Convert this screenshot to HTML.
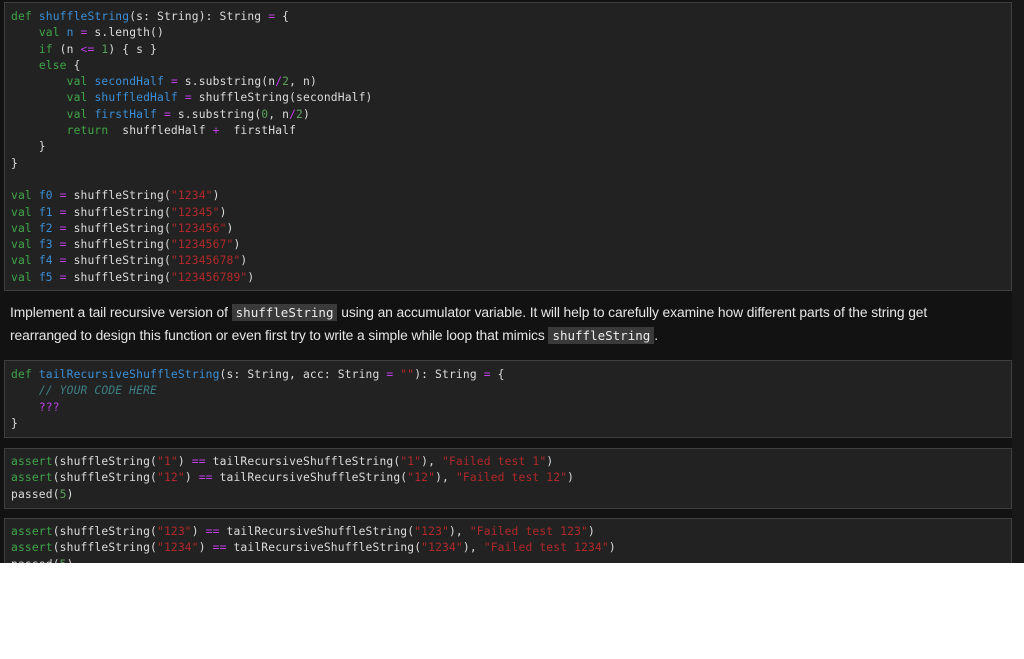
<!DOCTYPE html>
<html><head><style>
html,body{margin:0;padding:0;background:#fff;}
#wrap{position:absolute;left:0;top:0;width:1024px;height:563px;background:#121212;overflow:hidden;}
#strip{position:absolute;left:1012px;top:0;width:12px;height:563px;background:#181818;}
.blk{position:absolute;left:4px;width:1006px;background:#222222;border:1px solid #404040;}
pre{margin:0;padding:0;font-family:"DejaVu Sans Mono","Liberation Mono",monospace;font-size:11.3px;line-height:16.3px;color:#dcdcdc;position:absolute;left:6px;white-space:pre;letter-spacing:0.15px;}
.k{color:#3fa648}.f{color:#3a8fd8}.v{color:#3a8fd8}.o{color:#c03fe8}.n{color:#5ca15c}.s{color:#b2282a}.c{color:#3e8083;font-style:italic}
p{position:absolute;left:10px;top:301px;margin:0;width:1010px;white-space:nowrap;font-family:"Liberation Sans",sans-serif;font-size:13.85px;line-height:22px;color:#e6e6e6;letter-spacing:-0.1px;}
code{font-family:"DejaVu Sans Mono","Liberation Mono",monospace;font-size:12.5px;background:#3a3a3a;padding:1px 4px;color:#eee;letter-spacing:0;}
</style></head><body>
<div id="wrap"><div id="strip"></div>
<div class="blk" style="top:2px;height:287px"><pre style="top:6px"><span class="k">def</span> <span class="f">shuffleString</span>(s: String): String <span class="o">=</span> {
    <span class="k">val</span> <span class="v">n</span> <span class="o">=</span> s.length()
    <span class="k">if</span> (n <span class="o">&lt;=</span> <span class="n">1</span>) { s }
    <span class="k">else</span> {
        <span class="k">val</span> <span class="v">secondHalf</span> <span class="o">=</span> s.substring(n<span class="o">/</span><span class="n">2</span>, n)
        <span class="k">val</span> <span class="v">shuffledHalf</span> <span class="o">=</span> shuffleString(secondHalf)
        <span class="k">val</span> <span class="v">firstHalf</span> <span class="o">=</span> s.substring(<span class="n">0</span>, n<span class="o">/</span><span class="n">2</span>)
        <span class="k">return</span>  shuffledHalf <span class="o">+</span>  firstHalf
    }
}

<span class="k">val</span> <span class="v">f0</span> <span class="o">=</span> shuffleString(<span class="s">"1234"</span>)
<span class="k">val</span> <span class="v">f1</span> <span class="o">=</span> shuffleString(<span class="s">"12345"</span>)
<span class="k">val</span> <span class="v">f2</span> <span class="o">=</span> shuffleString(<span class="s">"123456"</span>)
<span class="k">val</span> <span class="v">f3</span> <span class="o">=</span> shuffleString(<span class="s">"1234567"</span>)
<span class="k">val</span> <span class="v">f4</span> <span class="o">=</span> shuffleString(<span class="s">"12345678"</span>)
<span class="k">val</span> <span class="v">f5</span> <span class="o">=</span> shuffleString(<span class="s">"123456789"</span>)</pre></div>
<p>Implement a tail recursive version of <code>shuffleString</code> using an accumulator variable. It will help to carefully examine how different parts of the string get<br>rearranged to design this function or even first try to write a simple while loop that mimics <code>shuffleString</code>.</p>
<div class="blk" style="top:360px;height:76px"><pre style="top:6px"><span class="k">def</span> <span class="f">tailRecursiveShuffleString</span>(s: String, acc: String <span class="o">=</span> <span class="s">""</span>): String <span class="o">=</span> {
    <span class="c">// YOUR CODE HERE</span>
    <span class="o">???</span>
}</pre></div>
<div class="blk" style="top:448px;height:59px"><pre style="top:5px"><span class="k">assert</span>(shuffleString(<span class="s">"1"</span>) <span class="o">==</span> tailRecursiveShuffleString(<span class="s">"1"</span>), <span class="s">"Failed test 1"</span>)
<span class="k">assert</span>(shuffleString(<span class="s">"12"</span>) <span class="o">==</span> tailRecursiveShuffleString(<span class="s">"12"</span>), <span class="s">"Failed test 12"</span>)
passed(<span class="n">5</span>)</pre></div>
<div class="blk" style="top:518px;height:59px"><pre style="top:5px"><span class="k">assert</span>(shuffleString(<span class="s">"123"</span>) <span class="o">==</span> tailRecursiveShuffleString(<span class="s">"123"</span>), <span class="s">"Failed test 123"</span>)
<span class="k">assert</span>(shuffleString(<span class="s">"1234"</span>) <span class="o">==</span> tailRecursiveShuffleString(<span class="s">"1234"</span>), <span class="s">"Failed test 1234"</span>)
passed(<span class="n">5</span>)</pre></div>
</div>
</body></html>
